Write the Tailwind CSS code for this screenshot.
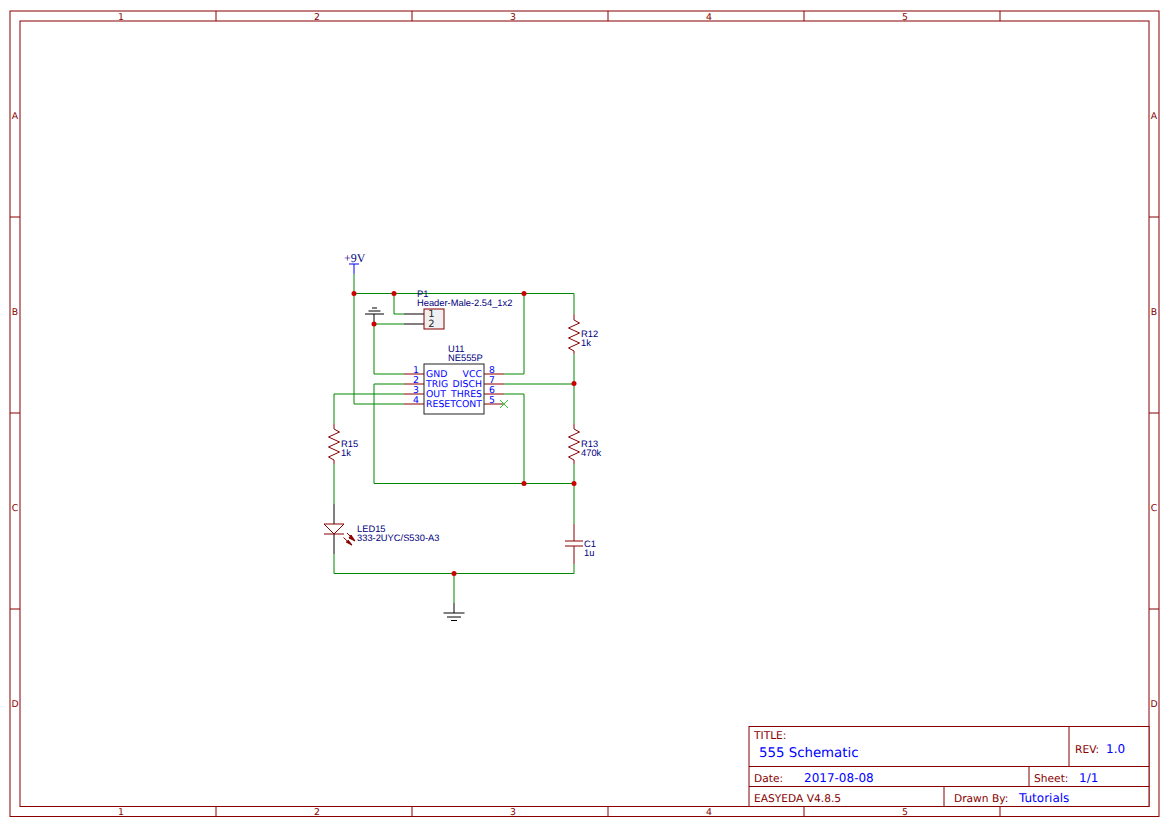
<!DOCTYPE html>
<html lang="en">
<head>
<meta charset="UTF-8">
<title>555 Schematic</title>
<script src="https://cdn.jsdelivr.net/npm/@tailwindcss/browser@4"></script>
</head>
<body class="bg-white">
<div class="w-[1169px] h-[827px] overflow-hidden">
<svg class="block [text-rendering:geometricPrecision]" width="1169" height="827" viewBox="0 0 1169 827" fill="none">
  <!-- sheet frame -->
  <g stroke="#880000" stroke-width="1">
    <rect x="10" y="11" width="1149" height="805.5"/>
    <rect x="20" y="21" width="1129" height="785.5"/>
    <path d="M216 11V21M412 11V21M608 11V21M804 11V21M1000 11V21"/>
    <path d="M216 806V816M412 806V816M608 806V816M804 806V816M1000 806V816"/>
    <path d="M10 217H20M10 413H20M10 609H20M1149 217H1159M1149 413H1159M1149 609H1159"/>
  </g>
  <g class="font-['DejaVu_Sans',sans-serif] text-[9.33px] fill-[#880000]" text-anchor="middle">
    <text x="121" y="19.5">1</text><text x="317" y="19.5">2</text><text x="513" y="19.5">3</text><text x="709" y="19.5">4</text><text x="905" y="19.5">5</text>
    <text x="121" y="815">1</text><text x="317" y="815">2</text><text x="513" y="815">3</text><text x="709" y="815">4</text><text x="905" y="815">5</text>
    <text x="15" y="119">A</text><text x="15" y="315">B</text><text x="15" y="511">C</text><text x="15" y="707">D</text>
    <text x="1154" y="119">A</text><text x="1154" y="315">B</text><text x="1154" y="511">C</text><text x="1154" y="707">D</text>
  </g>

  <!-- title block -->
  <g stroke="#880000" stroke-width="1">
    <rect x="749" y="726.5" width="400" height="80" class="fill-white"/>
    <path d="M749 766.5H1149M749 786.5H1149"/>
    <path d="M1069 727V767M1029 767V787M944 787V806"/>
  </g>
  <g class="font-['DejaVu_Sans',sans-serif] text-[10.67px] fill-[#880000]">
    <text x="754" y="738.500">TITLE:</text>
    <text x="1075" y="753">REV:</text>
    <text x="754" y="781.500">Date:</text>
    <text x="1034" y="781.500">Sheet:</text>
    <text x="754" y="801.500">EASYEDA V4.8.5</text>
    <text x="954" y="801.500">Drawn By:</text>
  </g>
  <g class="font-['DejaVu_Sans',sans-serif] text-[12px] fill-[#0000ff]">
    <text x="759" y="757" class="text-[13.33px]">555 Schematic</text>
    <text x="1106" y="753">1.0</text>
    <text x="804" y="781.500">2017-08-08</text>
    <text x="1079" y="781.500">1/1</text>
    <text x="1019" y="801.500">Tutorials</text>
  </g>

  <!-- wires -->
  <g stroke="#008800" stroke-width="1">
    <path d="M354 274V404H404"/>
    <path d="M354 293.500H574V314"/>
    <path d="M394 294V314H404"/>
    <path d="M374 324H404"/>
    <path d="M374 324V374H404"/>
    <path d="M404 384H374V483.500H574"/>
    <path d="M404 394H334V424"/>
    <path d="M334 464V504"/>
    <path d="M334 554V573.500H574V564"/>
    <path d="M504 374H524V294"/>
    <path d="M504 384H574"/>
    <path d="M504 394H524V484"/>
    <path d="M574 354V424"/>
    <path d="M574 464V524"/>
    <path d="M454 574V603"/>
  </g>

  <!-- +9V flag -->
  <path d="M354 264V274M349 264H359" stroke="#0000ff" stroke-width="1"/>
  <text x="344" y="262" class="font-['Liberation_Serif',serif] text-[12px] fill-[#000080]">+9V</text>

  <!-- grounds and black pins -->
  <g stroke="#000000" stroke-width="1">
    <path d="M404 314H424M404 324H424"/>
    <path d="M374 324V314M365 314H384M368.500 311H380.500M372 308H377"/>
    <path d="M334 504V524M334 534V554"/>
    <path d="M454 603V613M443.500 613H464.500M447 617H461M451 620.500H457"/>
  </g>

  <!-- resistors, cap, led -->
  <g stroke="#880000" stroke-width="1" stroke-linejoin="miter">
    <path d="M574 314V320L579.500 323L568.500 328L579.500 333L568.500 338L579.500 343L568.500 348L574 351V354"/>
    <path d="M574 424V429L579.500 432L568.500 437L579.500 442L568.500 447L579.500 452L568.500 457L574 460V464"/>
    <path d="M334 424V429L339.500 432L328.500 437L339.500 442L328.500 447L339.500 452L328.500 457L334 460V464"/>
    <path d="M574 524V541M565 541H583M565 546H583M574 546V564"/>
    <path d="M324 524H344L334 534ZM324 534H344"/>
    <path d="M347 533L355 541M343.500 537.500L351.500 545"/>
    <path d="M351 535L355 541L349 538ZM348 540L352 545L346 542" class="fill-[#880000]"/>
  </g>

  <!-- P1 header -->
  <rect x="424" y="309" width="20" height="20" stroke="#880000" stroke-width="1" class="fill-[#f0f0f0]"/>
  <g class="font-['DejaVu_Sans',sans-serif] text-[10px] fill-[#222222]" text-anchor="middle">
    <text x="431.500" y="317">1</text>
    <text x="431.500" y="327">2</text>
  </g>

  <!-- U11 -->
  <path d="M404 374H424M404 384H424M404 394H424M404 404H424M484 374H504M484 384H504M484 394H504M484 404H504" stroke="#880000" stroke-width="1"/>
  <rect x="424" y="364" width="60" height="50" stroke="#222222" stroke-width="1"/>
  <path d="M500 400L508 408M508 400L500 408" stroke="#33cc33" stroke-width="1"/>
  <g class="font-['DejaVu_Sans',sans-serif] text-[9.33px] fill-[#0000ff]">
    <text x="426" y="377">GND</text>
    <text x="426" y="387">TRIG</text>
    <text x="426" y="397">OUT</text>
    <text x="426" y="407">RESET</text>
    <g text-anchor="end">
      <text x="482" y="377">VCC</text>
      <text x="482" y="387">DISCH</text>
      <text x="482" y="397">THRES</text>
      <text x="482" y="407">CONT</text>
    </g>
    <g text-anchor="middle">
      <text x="416" y="373">1</text><text x="416" y="383">2</text><text x="416" y="393">3</text><text x="416" y="403">4</text>
      <text x="492" y="373">8</text><text x="492" y="383">7</text><text x="492" y="393">6</text><text x="492" y="403">5</text>
    </g>
  </g>

  <!-- designators -->
  <g class="font-['Liberation_Sans',sans-serif] text-[9.33px] fill-[#000080]">
    <text x="417" y="296.500">P1</text>
    <text x="417" y="305.500">Header-Male-2.54_1x2</text>
    <text x="448" y="352">U11</text>
    <text x="448" y="360.500">NE555P</text>
    <text x="581" y="337">R12</text>
    <text x="581" y="345.500">1k</text>
    <text x="581" y="447">R13</text>
    <text x="581" y="455.500">470k</text>
    <text x="341" y="447">R15</text>
    <text x="341" y="455.500">1k</text>
    <text x="357" y="532">LED15</text>
    <text x="357" y="541">333-2UYC/S530-A3</text>
    <text x="584" y="546.500">C1</text>
    <text x="584" y="556">1u</text>
  </g>

  <!-- junctions -->
  <g class="fill-[#cc0000]">
    <circle cx="354" cy="293.500" r="2.500"/>
    <circle cx="394" cy="293.500" r="2.500"/>
    <circle cx="524" cy="293.500" r="2.500"/>
    <circle cx="374" cy="324" r="2.500"/>
    <circle cx="574" cy="383.500" r="2.500"/>
    <circle cx="524" cy="483.500" r="2.500"/>
    <circle cx="574" cy="483.500" r="2.500"/>
    <circle cx="454" cy="573.500" r="2.500"/>
  </g>
</svg>
</div>
</body>
</html>
